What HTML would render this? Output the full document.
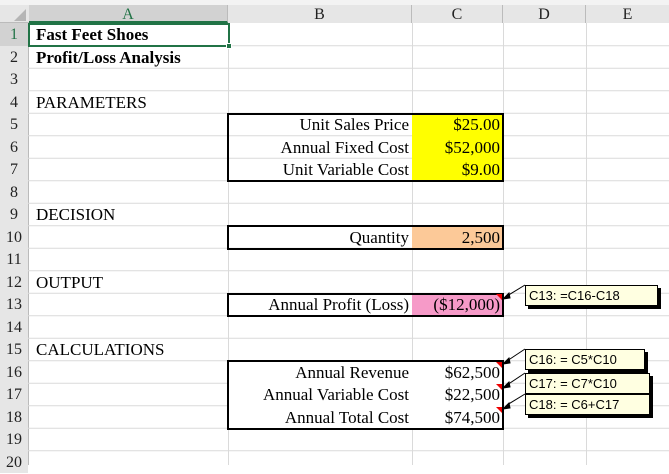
<!DOCTYPE html>
<html><head><style>
body{margin:0;width:669px;height:465px;overflow:hidden;background:#fff;position:relative;font-family:"Liberation Serif",serif;font-size:17px;color:#000}
div{position:absolute;box-sizing:border-box}
.h{background:#e6e6e6;color:#222;text-align:center;font-size:16px;line-height:19px;font-family:"Liberation Serif",serif}
.rn{left:0;width:28px;height:22.5px;line-height:23px}
.t{white-space:nowrap;line-height:23px;height:22.5px}
.r{text-align:right}
.cm{background:#ffffe1;border:1px solid #000;box-shadow:3px 3px 0 #000;font-family:"Liberation Sans",sans-serif;font-size:13px;line-height:19px;padding-left:3px;white-space:nowrap}
.tri{width:0;height:0;border-top:6px solid #e00;border-left:6px solid transparent}
</style></head><body>
<div style="left:0;top:0;width:669px;height:5px;background:#f3f3f3"></div>
<div class="h" style="left:0;top:5px;width:669px;height:18.3px;border-bottom:1px solid #bbb"></div>
<div class="h" style="left:0;top:23.3px;width:29px;height:442px;border-right:1px solid #bbb"></div>
<div style="left:14px;top:9px;width:0;height:0;border-left:12px solid transparent;border-bottom:12px solid #b5b5b5"></div>
<div class="h" style="left:29px;top:5px;width:199px;height:18.3px;background:#d2d2d2;border-bottom:2px solid #217346;border-right:1px solid #bbb;color:#217346">A</div>
<div class="h" style="left:228px;top:5px;width:184px;height:18.3px;border-right:1px solid #bbb">B</div>
<div class="h" style="left:412px;top:5px;width:91px;height:18.3px;border-right:1px solid #bbb">C</div>
<div class="h" style="left:503px;top:5px;width:83px;height:18.3px;border-right:1px solid #bbb">D</div>
<div class="h" style="left:586px;top:5px;width:83px;height:18.3px">E</div>
<svg style="position:absolute;left:0;top:0" width="669" height="465">
<g stroke="#dadada" stroke-width="1">
<line x1="228.5" y1="23" x2="228.5" y2="465"/><line x1="412.5" y1="23" x2="412.5" y2="465"/><line x1="503.5" y1="23" x2="503.5" y2="465"/><line x1="586.5" y1="23" x2="586.5" y2="465"/>
<line x1="0" y1="45.8" x2="669" y2="45.8"/><line x1="0" y1="68.3" x2="669" y2="68.3"/><line x1="0" y1="90.8" x2="669" y2="90.8"/><line x1="0" y1="113.3" x2="669" y2="113.3"/><line x1="0" y1="135.8" x2="669" y2="135.8"/><line x1="0" y1="158.3" x2="669" y2="158.3"/><line x1="0" y1="180.8" x2="669" y2="180.8"/><line x1="0" y1="203.3" x2="669" y2="203.3"/><line x1="0" y1="225.8" x2="669" y2="225.8"/><line x1="0" y1="248.3" x2="669" y2="248.3"/><line x1="0" y1="270.8" x2="669" y2="270.8"/><line x1="0" y1="293.3" x2="669" y2="293.3"/><line x1="0" y1="315.8" x2="669" y2="315.8"/><line x1="0" y1="338.3" x2="669" y2="338.3"/><line x1="0" y1="360.8" x2="669" y2="360.8"/><line x1="0" y1="383.3" x2="669" y2="383.3"/><line x1="0" y1="405.8" x2="669" y2="405.8"/><line x1="0" y1="428.3" x2="669" y2="428.3"/><line x1="0" y1="450.8" x2="669" y2="450.8"/>
</g>
</svg>
<div class="h rn" style="top:23.3px;background:#d2d2d2;color:#217346">1</div>
<div class="h rn" style="top:45.8px">2</div>
<div class="h rn" style="top:68.3px">3</div>
<div class="h rn" style="top:90.8px">4</div>
<div class="h rn" style="top:113.3px">5</div>
<div class="h rn" style="top:135.8px">6</div>
<div class="h rn" style="top:158.3px">7</div>
<div class="h rn" style="top:180.8px">8</div>
<div class="h rn" style="top:203.3px">9</div>
<div class="h rn" style="top:225.8px">10</div>
<div class="h rn" style="top:248.3px">11</div>
<div class="h rn" style="top:270.8px">12</div>
<div class="h rn" style="top:293.3px">13</div>
<div class="h rn" style="top:315.8px">14</div>
<div class="h rn" style="top:338.3px">15</div>
<div class="h rn" style="top:360.8px">16</div>
<div class="h rn" style="top:383.3px">17</div>
<div class="h rn" style="top:405.8px">18</div>
<div class="h rn" style="top:428.3px">19</div>
<div class="h rn" style="top:450.8px">20</div>

<div style="left:28px;top:22.5px;width:202px;height:24.5px;border:2px solid #217346"></div>
<div style="left:226px;top:43px;width:6px;height:6px;background:#217346;border:1px solid #fff"></div>

<div class="t" style="left:36px;top:23.3px;font-weight:bold">Fast Feet Shoes</div>
<div class="t" style="left:36px;top:45.8px;font-weight:bold">Profit/Loss Analysis</div>
<div class="t" style="left:36px;top:90.8px">PARAMETERS</div>
<div class="t" style="left:36px;top:203.3px">DECISION</div>
<div class="t" style="left:36px;top:270.8px">OUTPUT</div>
<div class="t" style="left:36px;top:338.3px">CALCULATIONS</div>

<div style="left:412px;top:113.3px;width:91px;height:67.5px;background:#ffff00"></div>
<div style="left:412px;top:225.8px;width:91px;height:22.5px;background:#fcc998"></div>
<div style="left:412px;top:293.3px;width:91px;height:22.5px;background:#f69ac8"></div>
<div style="left:228px;top:360.8px;width:275px;height:67.5px;background:#fff"></div>

<div style="left:227px;top:112.5px;width:277px;height:69.5px;border:2px solid #000"></div>
<div style="left:227px;top:225px;width:277px;height:24.5px;border:2px solid #000"></div>
<div style="left:227px;top:292.5px;width:277px;height:24.5px;border:2px solid #000"></div>
<div style="left:227px;top:360px;width:277px;height:69.5px;border:2px solid #000"></div>

<div class="t r" style="left:228px;top:113.3px;width:181px">Unit Sales Price</div>
<div class="t r" style="left:228px;top:135.8px;width:181px">Annual Fixed Cost</div>
<div class="t r" style="left:228px;top:158.3px;width:181px">Unit Variable Cost</div>
<div class="t r" style="left:228px;top:225.8px;width:181px">Quantity</div>
<div class="t r" style="left:228px;top:293.3px;width:181px">Annual Profit (Loss)</div>
<div class="t r" style="left:228px;top:360.8px;width:181px">Annual Revenue</div>
<div class="t r" style="left:228px;top:383.3px;width:181px">Annual Variable Cost</div>
<div class="t r" style="left:228px;top:405.8px;width:181px">Annual Total Cost</div>

<div class="t r" style="left:412px;top:113.3px;width:88px">$25.00</div>
<div class="t r" style="left:412px;top:135.8px;width:88px">$52,000</div>
<div class="t r" style="left:412px;top:158.3px;width:88px">$9.00</div>
<div class="t r" style="left:412px;top:225.8px;width:88px">2,500</div>
<div class="t r" style="left:412px;top:293.3px;width:88px">($12,000)</div>
<div class="t r" style="left:412px;top:360.8px;width:88px">$62,500</div>
<div class="t r" style="left:412px;top:383.3px;width:88px">$22,500</div>
<div class="t r" style="left:412px;top:405.8px;width:88px">$74,500</div>

<div class="tri" style="left:496px;top:294px"></div>
<div class="tri" style="left:496px;top:362px"></div>
<div class="tri" style="left:496px;top:384px"></div>
<div class="tri" style="left:496px;top:407px"></div>

<svg style="position:absolute;left:0;top:0" width="669" height="465">
<g stroke="#000" stroke-width="1" fill="#000">
<line x1="525" y1="285" x2="507" y2="296"/><polygon points="503,299 509,293 510,298"/>
<line x1="525" y1="349" x2="507" y2="361"/><polygon points="503,364 509,358 510,363"/>
<line x1="525" y1="373" x2="507" y2="385"/><polygon points="503,388 509,382 510,387"/>
<line x1="525" y1="394" x2="507" y2="405"/><polygon points="503,409 509,403 510,408"/>
</g></svg>
<div class="cm" style="left:525px;top:285px;width:133px;height:21px">C13: =C16-C18</div>
<div class="cm" style="left:525px;top:349px;width:120px;height:21px">C16: = C5*C10</div>
<div class="cm" style="left:525px;top:373px;width:125px;height:21px">C17: = C7*C10</div>
<div class="cm" style="left:525px;top:394px;width:125px;height:21px">C18: = C6+C17</div>
</body></html>
